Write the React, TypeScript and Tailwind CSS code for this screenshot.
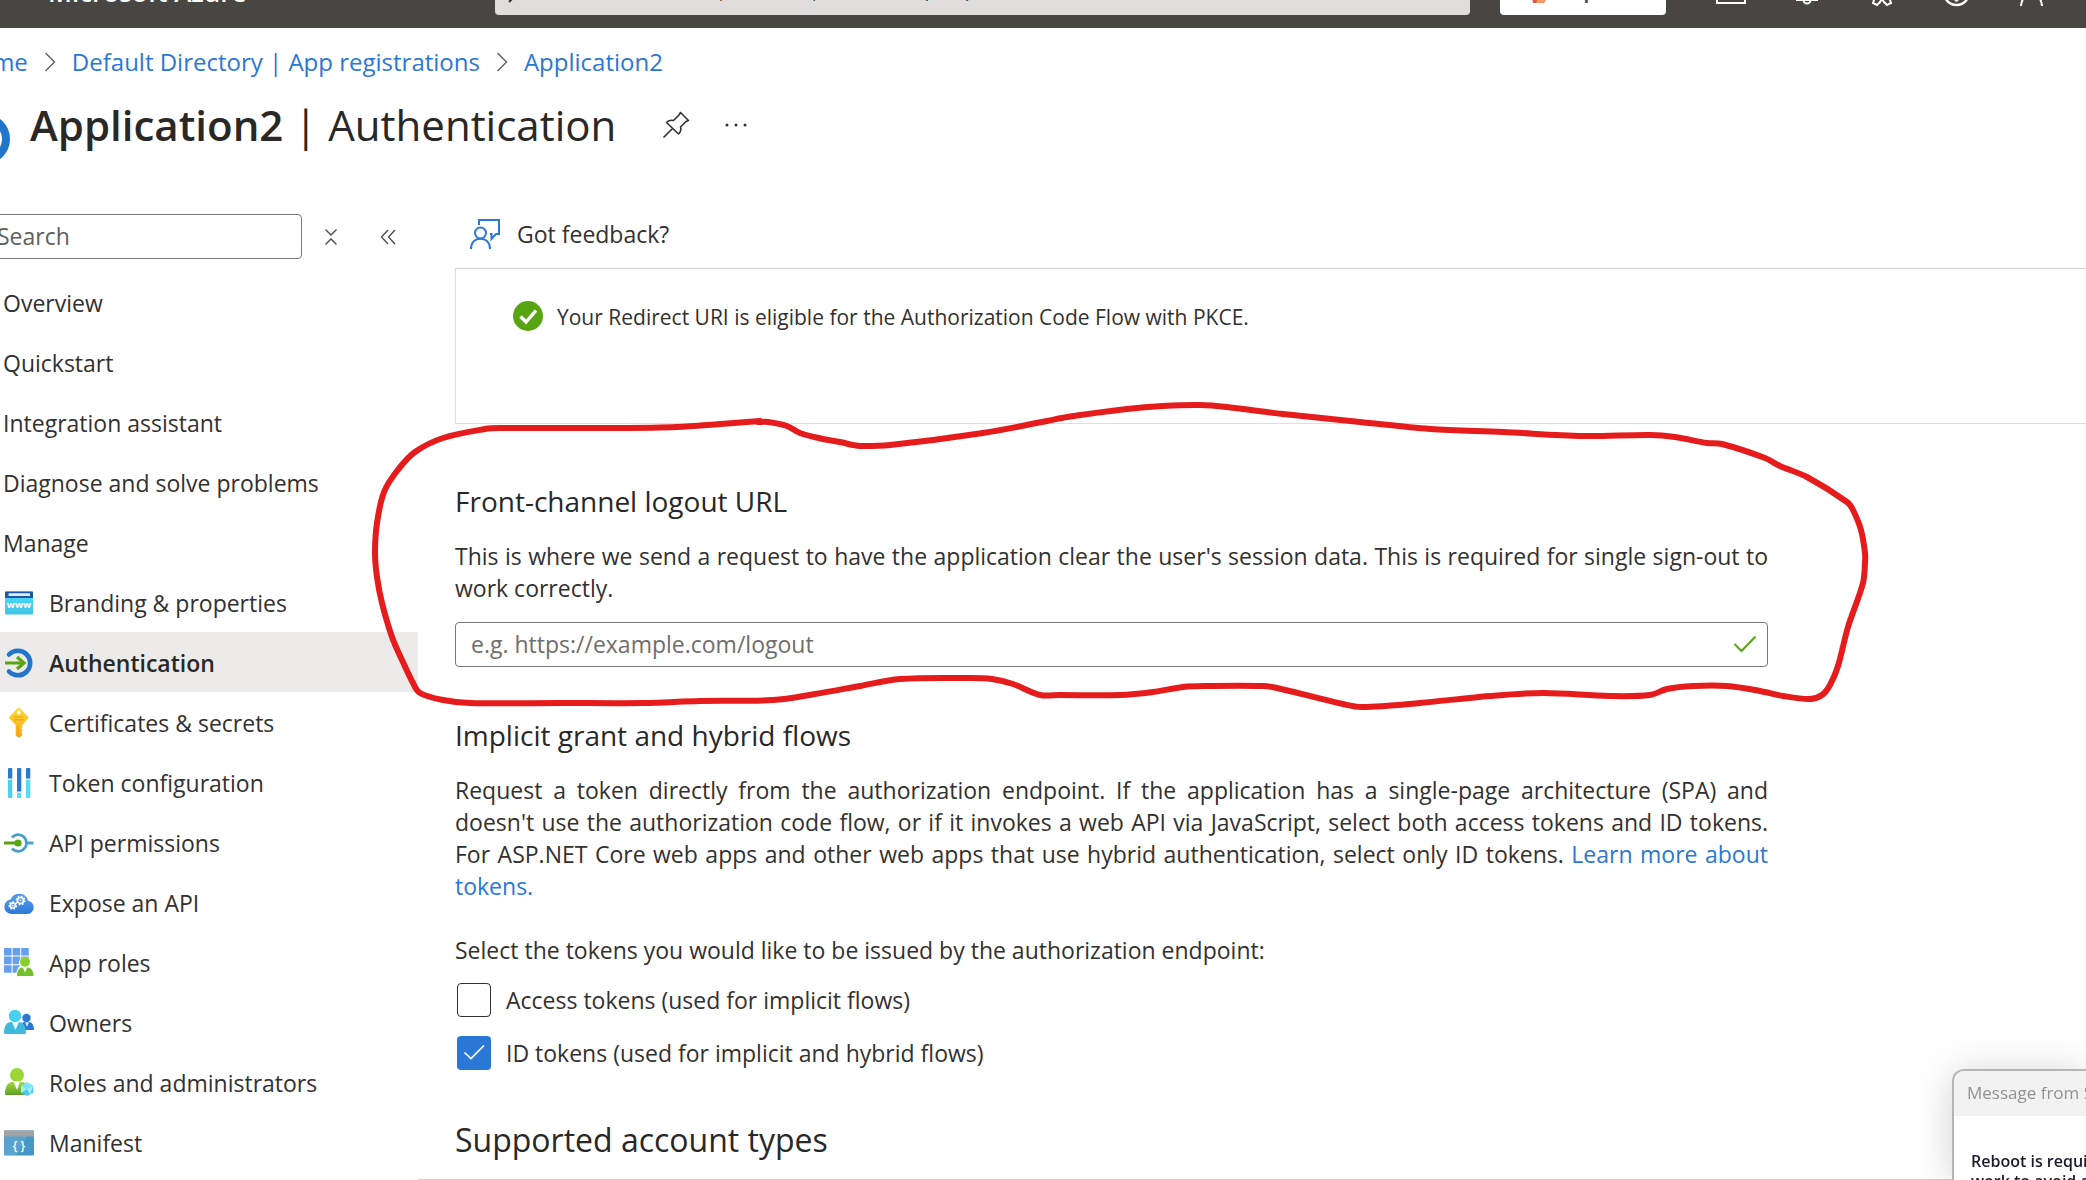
import React from "react";

type IconProps = { children: React.ReactNode };

function Icon({ children }: IconProps) {
  return (
    <svg viewBox="0 0 30 30" className="size-[30px] shrink-0" aria-hidden="true">
      {children}
    </svg>
  );
}

const gear = (cx: number, cy: number, r: number) => (
  <g>
    <circle cx={cx} cy={cy} r={r} fill="none" stroke="#fff" strokeWidth="1.6" />
    <circle cx={cx} cy={cy} r={r + 1.2} fill="none" stroke="#fff" strokeWidth="1.4" strokeDasharray="1.7 1.6" />
    <circle cx={cx} cy={cy} r="1.1" fill="#cfe2fb" />
  </g>
);

const BrandingIcon = () => (
  <Icon>
    <defs>
      <linearGradient id="brand" x1="0" y1="0" x2="0" y2="1">
        <stop offset="0" stopColor="#4fdcfb" />
        <stop offset="1" stopColor="#3fc3e3" />
      </linearGradient>
    </defs>
    <rect x="1" y="3.5" width="28" height="23" rx="1" fill="url(#brand)" />
    <path d="M1 4.5a1 1 0 0 1 1-1h26a1 1 0 0 1 1 1V10H1z" fill="#1a5ba8" />
    <rect x="4.500" y="5.300" width="21.500" height="2.800" rx=".4" fill="#e4e9f1" />
    <text x="15" y="20" textAnchor="middle" fontSize="9.500" fontWeight="700" fontFamily="Open Sans" fill="#fff">
      www
    </text>
  </Icon>
);

const AuthIcon = () => (
  <Icon>
    <path d="M5 6.500A12.300 12.300 0 1 1 5 23.500" fill="none" stroke="#2375cb" strokeWidth="4.600" strokeLinecap="round" />
    <path d="M1 15h18" stroke="#57a510" strokeWidth="3" />
    <path d="M13 9l7 6-7 6" fill="none" stroke="#57a510" strokeWidth="3.200" />
  </Icon>
);

const KeyIcon = () => (
  <Icon>
    <defs>
      <linearGradient id="key" x1="0" y1="0" x2="0" y2="1">
        <stop offset="0" stopColor="#ffd92e" />
        <stop offset="1" stopColor="#f6a91c" />
      </linearGradient>
    </defs>
    <path
      d="M13 .8a2.400 2.400 0 0 1 3.400 0l7.300 7.500a2 2 0 0 1 0 2.800L18.300 17v2.200l-1 1.200 1 1.200v1.500l-1 1.200 1 1.200v1.700L14.700 30l-3-2.800V17L6 11.100a2 2 0 0 1 0-2.800z"
      fill="url(#key)"
    />
    <circle cx="14.700" cy="4.500" r="2" fill="#fff" />
    <path d="M10 9h9.500M10 11.800h9.500" stroke="#f5a01a" strokeWidth="1.200" />
    <path d="M14 17.500v10" stroke="#f39a14" strokeWidth="1" />
  </Icon>
);

const TokenIcon = () => (
  <Icon>
    <rect x="4" y="0" width="4.300" height="11" rx="1" fill="#2a78d6" />
    <rect x="4" y="11.800" width="4.300" height="18.200" rx="1" fill="#4dd0ee" />
    <rect x="13" y="0" width="4.300" height="24" rx="1" fill="#2a78d6" />
    <rect x="13" y="25" width="4.300" height="5" rx="1" fill="#57dcf8" />
    <rect x="22" y="0" width="4.300" height="11" rx="1" fill="#2a78d6" />
    <rect x="22" y="11.800" width="4.300" height="18.200" rx="1" fill="#57dcf8" />
    <path d="M3 11.200h6.300M12 24.300h6.300M21 11.200h6.300" stroke="#e3e3e3" strokeWidth="1.400" />
  </Icon>
);

const ApiPermIcon = () => (
  <Icon>
    <path d="M8 9.500A8.300 8.300 0 1 1 8 20.500" fill="none" stroke="#4aa0cd" strokeWidth="2.800" />
    <path d="M23 15h6.500" stroke="#4aa0cd" strokeWidth="3" />
    <path d="M0 15h13" stroke="#57a510" strokeWidth="3" />
    <circle cx="14" cy="15" r="3.600" fill="#57a510" />
  </Icon>
);

const CloudIcon = () => (
  <Icon>
    <defs>
      <linearGradient id="cloud" x1="0" y1="0" x2="0" y2="1">
        <stop offset="0" stopColor="#5b9cef" />
        <stop offset="1" stopColor="#2c7bd8" />
      </linearGradient>
    </defs>
    <path d="M7 26a7.300 7.300 0 0 1-.4-14.500A9.200 9.200 0 0 1 24 12.700 6.700 6.700 0 0 1 23.500 26z" fill="url(#cloud)" />
    {gear(16.5, 12.5, 3)}
    {gear(8.8, 17.5, 2.5)}
  </Icon>
);

const AppRolesIcon = () => (
  <Icon>
    {[0, 8.6, 17.2].map((y) =>
      [0, 8.6, 17.2].map((x) => <rect key={`${x}-${y}`} x={x} y={y} width="7.600" height="7.600" rx=".6" fill="#679ff0" />)
    )}
    <path d="M12 29c0-6 2-10 4-11a6 6 0 1 1 10 0c3 1 5 5 5 11z" fill="#fff" />
    <circle cx="21" cy="13.700" r="5" fill="#86d02c" />
    <path d="M13 28c0-5 2-8.500 5.500-8.500h5c3.500 0 6 3.500 6 8.500z" fill="#74c02a" />
    <path d="M18.700 19.300h4.600L21 24.500z" fill="#eef8e2" />
  </Icon>
);

const OwnersIcon = () => (
  <Icon>
    <circle cx="22.500" cy="10" r="4.200" fill="#2a78d6" />
    <path d="M16 22c0-5 2-8 4.500-8h4.500c3 0 5 3.500 5 8z" fill="#2a78d6" />
    <path d="M21 14.200h4L23 19z" fill="#dcebfb" />
    <circle cx="11" cy="8" r="6.200" fill="#49d0f1" />
    <path d="M0 25c0-6.500 2.500-11 7-11h8c4.500 0 7 4.500 7 11a1.500 1.500 0 0 1-1.500 1H1.500A1.500 1.500 0 0 1 0 25z" fill="#3fb9dd" />
    <path d="M8 14h7l-3.500 8z" fill="#e8f8fd" />
  </Icon>
);

const AdminIcon = () => (
  <Icon>
    <defs>
      <linearGradient id="adm" x1="0" y1="0" x2="0" y2="1">
        <stop offset="0" stopColor="#a2d93a" />
        <stop offset="1" stopColor="#609f26" />
      </linearGradient>
    </defs>
    <path d="M1 26c0-7 2.500-12 7.500-12h9c5 0 7.500 5 7.500 12a1 1 0 0 1-1 1H2a1 1 0 0 1-1-1z" fill="url(#adm)" />
    <circle cx="13" cy="7" r="7" fill="#9ad636" />
    <path d="M9.500 13.500h6.500L13 22z" fill="#fff" />
    <path d="M23 14.500l6.300 3.300v7L23 28l-6-3.200v-7z" fill="#4cc9ea" />
    <path d="M23 14.500l6.300 3.300L23 21l-6-3.200z" fill="#7fe3f8" />
    <path d="M23 21l6.300-3.200L26 26.500zM17 17.800L23 21l-6 4z" fill="#a0eefc" />
  </Icon>
);

const ManifestIcon = () => (
  <Icon>
    <rect x="0" y="2.500" width="30" height="25" rx=".6" fill="#4497c6" />
    <rect x="0" y="2.500" width="30" height="6" fill="#a3a3a3" />
    <path d="M0 8.500h23L12 27.500H0z" fill="#fff" opacity=".12" />
    <text x="15" y="21.500" textAnchor="middle" fontSize="12" fontWeight="600" fontFamily="Open Sans" fill="#fff">
      {"{ }"}
    </text>
  </Icon>
);

const plainItems = ["Overview", "Quickstart", "Integration assistant", "Diagnose and solve problems", "Manage"];

const manageItems: { label: string; icon: React.ReactNode; active?: boolean }[] = [
  { label: "Branding & properties", icon: <BrandingIcon /> },
  { label: "Authentication", icon: <AuthIcon />, active: true },
  { label: "Certificates & secrets", icon: <KeyIcon /> },
  { label: "Token configuration", icon: <TokenIcon /> },
  { label: "API permissions", icon: <ApiPermIcon /> },
  { label: "Expose an API", icon: <CloudIcon /> },
  { label: "App roles", icon: <AppRolesIcon /> },
  { label: "Owners", icon: <OwnersIcon /> },
  { label: "Roles and administrators", icon: <AdminIcon /> },
  { label: "Manifest", icon: <ManifestIcon /> },
];

const strokePoints: [number, number][] = [
  [760, 421], [720, 424], [677, 427], [620, 428], [500, 428], [485, 429], [443, 438], [415, 452], [397, 471], [384, 492], [377, 523],
  [375, 553], [377, 577], [382, 603], [392, 637], [402, 660], [413, 683], [420, 693], [443, 700], [470, 703], [560, 703],
  [643, 703], [700, 701], [773, 700], [815, 694], [860, 686], [900, 679], [970, 678], [992, 679], [1013, 684], [1040, 695],
  [1060, 695], [1120, 695], [1153, 692], [1183, 687], [1207, 686], [1263, 686], [1277, 688], [1343, 704], [1362, 707],
  [1420, 703], [1490, 696], [1543, 693], [1610, 696], [1650, 695], [1667, 689], [1693, 686], [1727, 686], [1760, 691],
  [1783, 696], [1810, 699], [1822, 695], [1830, 685], [1838, 666], [1848, 627], [1863, 583], [1865, 563], [1865, 553],
  [1861, 530], [1853, 510], [1847, 502], [1807, 477], [1780, 466], [1765, 458], [1722, 444], [1707, 443], [1675, 437],
  [1650, 435], [1583, 436], [1503, 432], [1430, 429], [1360, 422], [1283, 414], [1227, 407], [1200, 405], [1163, 406],
  [1127, 409], [1067, 417], [1047, 421], [983, 433], [890, 445], [860, 446], [853, 445], [840, 442], [823, 439],
  [800, 433], [787, 426], [768, 422], [758, 422],
];

function smoothPath(p: [number, number][]) {
  let d = `M${p[0][0]} ${p[0][1]}`;
  for (let i = 0; i < p.length - 1; i++) {
    const a = p[Math.max(i - 1, 0)];
    const b = p[i];
    const c = p[i + 1];
    const e = p[Math.min(i + 2, p.length - 1)];
    const len = Math.hypot(c[0] - b[0], c[1] - b[1]) / 3;
    const t1 = Math.hypot(c[0] - a[0], c[1] - a[1]) || 1;
    const t2 = Math.hypot(e[0] - b[0], e[1] - b[1]) || 1;
    const x1 = b[0] + ((c[0] - a[0]) / t1) * len;
    const y1 = b[1] + ((c[1] - a[1]) / t1) * len;
    const x2 = c[0] - ((e[0] - b[0]) / t2) * len;
    const y2 = c[1] - ((e[1] - b[1]) / t2) * len;
    d += `C${x1} ${y1} ${x2} ${y2} ${c[0]} ${c[1]}`;
  }
  return d;
}

function TopBar() {
  return (
    <header className="flex h-7 items-start overflow-hidden bg-[#474643]">
      <div className="-mt-6 ml-12 w-[447px] shrink-0 text-[26px]/8 font-semibold text-white">Microsoft Azure</div>
      <div className="-mt-[29px] flex h-11 min-w-0 max-w-[975px] flex-1 items-center rounded-[4px] bg-[#dfdedc] pl-3">
        <svg viewBox="0 0 24 24" className="size-6 shrink-0" fill="none" stroke="#333" strokeWidth="2" aria-hidden="true">
          <circle cx="14" cy="9" r="7" />
          <path d="M9 14l-7 7" />
        </svg>
        <input
          aria-label="Search resources"
          placeholder="Search resources, services, and docs (G+/)"
          className="mb-2 ml-3 min-w-0 flex-1 bg-transparent text-[22px]/8 text-[#333] outline-none placeholder:text-[#444]"
        />
      </div>
      <button className="-mt-[29px] ml-[30px] flex h-11 w-[166px] shrink-0 items-center gap-1 rounded-[4px] bg-white pl-7">
        <svg viewBox="0 0 24 24" className="mt-1 size-6 shrink-0" aria-hidden="true">
          <path d="M3 10l5-8h9l4 9-5 9H5z" fill="#e2574c" />
          <path d="M8 20l3-8h9l-3 6a3 3 0 0 1-3 2z" fill="#fd9a5f" />
        </svg>
        <span className="mb-2 text-[22px]/8 font-semibold text-[#2f4673]">Copilot</span>
      </button>
      <div className="-mt-[23px] ml-[50px] flex shrink-0 items-start gap-[45px] text-white">
        <svg viewBox="0 0 30 30" className="h-[30px] w-[30px]" fill="none" stroke="currentColor" strokeWidth="2" aria-hidden="true">
          <rect x="1" y="4" width="28" height="22" />
        </svg>
        <svg viewBox="0 0 30 30" className="h-[30px] w-[30px]" fill="none" stroke="currentColor" strokeWidth="2" aria-hidden="true">
          <path d="M5 23h22M7 23V12a8 8 0 0 1 16 0v11M12.500 23a3.500 3.500 0 0 0 7 0" />
        </svg>
        <svg viewBox="0 0 30 30" className="h-[30px] w-[30px]" fill="none" stroke="currentColor" strokeWidth="2" aria-hidden="true">
          <path d="M9 20l-2 6 4 2 3-3 2-3 2 3 3 3 4-2-2-6" />
          <circle cx="16" cy="13" r="5" />
        </svg>
        <svg viewBox="0 0 30 30" className="h-[30px] w-[30px]" fill="none" stroke="currentColor" strokeWidth="2.400" aria-hidden="true">
          <circle cx="15.500" cy="15.500" r="12.500" />
          <circle cx="15.500" cy="22.500" r="1" fill="currentColor" />
        </svg>
        <svg viewBox="0 0 30 30" className="h-[30px] w-[30px]" fill="none" stroke="currentColor" strokeWidth="2" aria-hidden="true">
          <path d="M5 29c1-9 5-12 10.500-12S25 20 26 29" />
          <circle cx="15.500" cy="9" r="7" />
        </svg>
      </div>
    </header>
  );
}

const Chevron = () => (
  <svg viewBox="0 0 12 20" className="h-5 w-3 shrink-0" fill="none" stroke="#605e5c" strokeWidth="1.400" aria-hidden="true">
    <path d="M1.500 1l9 9-9 9" />
  </svg>
);

const linkClass = "text-[#2a78d6]";

export default function App() {
  return (
    <div className="relative min-h-screen overflow-hidden bg-white font-['Open_Sans',sans-serif] text-[23px]/8 text-[#323130]">
      <TopBar />

      <nav aria-label="Breadcrumb" className="mt-[18px] -ml-10 flex items-center gap-4 whitespace-nowrap text-2xl/8">
        <a href="#home" className={linkClass}>Home</a>
        <Chevron />
        <a href="#apps" className={linkClass}>Default Directory | App registrations</a>
        <Chevron />
        <a href="#app" className={linkClass}>Application2</a>
      </nav>

      <div className="mt-[19px] -ml-10 flex h-14 items-center">
        <svg viewBox="0 0 50 50" className="mt-7 size-[50px] shrink-0" aria-hidden="true">
          <circle cx="25" cy="25" r="21" fill="none" stroke="#2375cb" strokeWidth="8" />
        </svg>
        <h1 className="ml-5 whitespace-nowrap text-[42px]/14 text-[#292827]">
          <span className="font-semibold">Application2</span> | Authentication
        </h1>
        <button aria-label="Pin" className="ml-[46px]">
          <svg viewBox="0 0 28 28" className="size-7" fill="none" stroke="#323130" strokeWidth="1.600" strokeLinejoin="round" aria-hidden="true">
            <path d="M1.500 26.500l9-9M18.500 1.500l8 8-2.500 1-5.500 5.500c1 3-.5 5.500-2 7L4.500 11.500c2-2 4.500-2.500 7-2l5.500-5.500z" />
          </svg>
        </button>
        <button aria-label="More" className="ml-[34px]">
          <svg viewBox="0 0 24 6" className="h-1.5 w-6" fill="#323130" aria-hidden="true">
            <circle cx="3" cy="3" r="1.500" />
            <circle cx="12" cy="3" r="1.500" />
            <circle cx="21" cy="3" r="1.500" />
          </svg>
        </button>
      </div>

      <div className="flex items-start pt-[61px]">
        <aside className="w-[418px] shrink-0">
          <div className="flex items-center">
            <input
              aria-label="Search"
              placeholder="Search"
              className="-ml-10 h-[45px] w-[342px] rounded-[4px] border border-[#7a7876] pb-0.5 pl-9 outline-none placeholder:text-[#605e5c]"
            />
            <button aria-label="Collapse all" className="ml-[21px]">
              <svg viewBox="0 0 16 20" className="h-5 w-4" fill="none" stroke="#4a4846" strokeWidth="1.300" aria-hidden="true">
                <path d="M2.500 2.500L8 8l5.500-5.500M2.500 17.500L8 12l5.500 5.500" />
              </svg>
            </button>
            <button aria-label="Hide menu" className="ml-10">
              <svg viewBox="0 0 18 18" className="size-[18px]" fill="none" stroke="#4a4846" strokeWidth="1.300" aria-hidden="true">
                <path d="M9 2L2.500 9 9 16M16 2L9.500 9 16 16" />
              </svg>
            </button>
          </div>
          <nav aria-label="Menu" className="mt-[13px]">
            {plainItems.map((t) => (
              <a key={t} href="#menu" className="flex h-15 items-center pt-0.5 pl-[3px]">
                {t}
              </a>
            ))}
            {manageItems.map((m) => (
              <a
                key={m.label}
                href="#menu"
                className={
                  m.active
                    ? "flex h-15 items-center gap-[15px] bg-[#ecebe9] pt-0.5 pl-1 font-semibold text-[#292827]"
                    : "flex h-15 items-center gap-[15px] pt-0.5 pl-1"
                }
              >
                {m.icon}
                {m.label}
              </a>
            ))}
          </nav>
        </aside>

        <main className="min-w-0 flex-1">
          <div className="pl-[37px]">
            <div className="flex h-[54px] items-start pt-1 pl-[14px]">
              <button className="flex items-center gap-4">
                <svg viewBox="0 0 32 32" className="size-8" fill="none" stroke="#2a78d6" strokeWidth="2" aria-hidden="true">
                  <path d="M10 7V2h20v14h-3l-4.500 5v-5h-1.500" />
                  <circle cx="11.500" cy="15" r="5.500" />
                  <path d="M2 31c0-6.500 4-10.300 9.500-10.300S21 24.500 21 31" />
                </svg>
                Got feedback?
              </button>
            </div>

            <section className="flex h-[156px] items-start gap-[14px] border border-r-0 border-[#e1dfdd] border-t-[#d2d0ce] pt-8 pl-[57px] text-[21px]/8">
              <svg viewBox="0 0 30 30" className="size-[30px] shrink-0" aria-hidden="true">
                <circle cx="15" cy="15" r="15" fill="#57a510" />
                <path d="M7.500 15.500l5.500 5.500L23 9.500" fill="none" stroke="#fff" strokeWidth="3.400" />
              </svg>
              <p>Your Redirect URI is eligible for the Authorization Code Flow with PKCE.</p>
            </section>

            <div className="max-w-[1313px]">
              <h2 className="mt-[59px] text-[28px]/9 text-[#292827]">Front-channel logout URL</h2>
              <p className="mt-[21px] text-justify">
                This is where we send a request to have the application clear the user's session data. This is required for single
                sign-out to work correctly.
              </p>
              <div className="relative mt-[18px]">
                <input
                  aria-label="Front-channel logout URL"
                  placeholder="e.g. https://example.com/logout"
                  className="block h-[45px] w-full rounded-[4px] border border-[#7a7876] px-[15px] pb-0.5 outline-none placeholder:text-[#706e6c]"
                />
                <svg viewBox="0 0 24 18" className="absolute top-[13px] right-[11px] h-[18px] w-6" fill="none" stroke="#57a510" strokeWidth="2" aria-hidden="true">
                  <path d="M1.500 9l7 7L22.500 1.500" />
                </svg>
              </div>

              <h2 className="mt-[50px] text-[28px]/9 text-[#292827]">Implicit grant and hybrid flows</h2>
              <p className="mt-[21px] text-justify">
                Request a token directly from the authorization endpoint. If the application has a single-page architecture (SPA)
                and doesn't use the authorization code flow, or if it invokes a web API via JavaScript, select both access tokens
                and ID tokens. For ASP.NET Core web apps and other web apps that use hybrid authentication, select only ID tokens.{" "}
                <a href="#learn" className={linkClass}>Learn more about tokens.</a>
              </p>
              <p className="mt-8">Select the tokens you would like to be issued by the authorization endpoint:</p>

              <div className="mt-[17px] ml-[2px] flex flex-col gap-[19px]">
                <label className="flex items-center gap-[15px]">
                  <input type="checkbox" className="size-[34px] appearance-none rounded-[4px] border border-[#323130]" />
                  Access tokens (used for implicit flows)
                </label>
                <label className="flex items-center gap-[15px]">
                  <span className="grid">
                    <input
                      type="checkbox"
                      defaultChecked
                      className="col-start-1 row-start-1 size-[34px] appearance-none rounded-[4px] bg-[#2a78d6]"
                    />
                    <svg viewBox="0 0 34 34" className="pointer-events-none col-start-1 row-start-1 size-[34px]" fill="none" stroke="#fff" strokeWidth="1.700" aria-hidden="true">
                      <path d="M7.500 16.500l6.500 6L27 9.500" />
                    </svg>
                  </span>
                  ID tokens (used for implicit and hybrid flows)
                </label>
              </div>

              <h2 className="mt-[50px] text-[32px]/10 text-[#292827]">Supported account types</h2>
            </div>
          </div>
          <div className="mt-[19px] border-t border-[#d2d0ce]" />
        </main>
      </div>

      <svg viewBox="0 0 2086 1180" className="pointer-events-none absolute top-0 left-0 h-[1180px] w-[2086px]" aria-hidden="true">
        <path d={smoothPath(strokePoints)} fill="none" stroke="#e61b1b" strokeWidth="6" strokeLinecap="round" strokeLinejoin="round" />
      </svg>

      <div
        role="dialog"
        aria-label="Message"
        className="fixed right-0 bottom-0 h-[111px] w-[134px] overflow-hidden rounded-tl-[12px] border-t-2 border-l-2 border-[#b5b5b5] bg-white whitespace-nowrap shadow-[0_4px_40px_rgba(0,0,0,0.18)]"
      >
        <div className="h-[45px] bg-[#f2f2f2] pt-2 pl-[13px] text-[17px]/7 text-[#929292]">Message from S</div>
        <div className="pt-[35px] pl-[17px] text-base/5 font-semibold text-[#1c1a2c]">
          <p>Reboot is requi</p>
          <p>work to avoid a</p>
        </div>
      </div>
    </div>
  );
}
